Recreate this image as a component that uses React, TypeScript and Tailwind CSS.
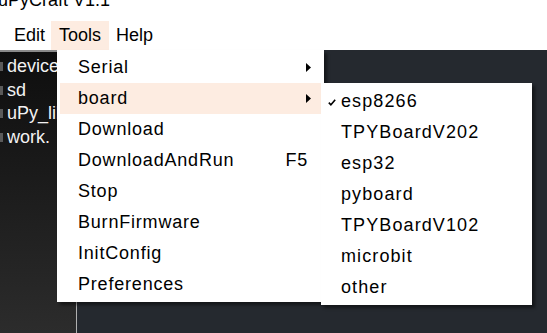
import React from "react";

const treeItems = ["device", "sd", "uPy_lib", "work."];

const toolItems = [
  { label: "Serial", sub: true },
  { label: "board", sub: true, active: true },
  { label: "Download" },
  { label: "DownloadAndRun", key: "F5" },
  { label: "Stop" },
  { label: "BurnFirmware" },
  { label: "InitConfig" },
  { label: "Preferences" },
];

const boards = ["esp8266", "TPYBoardV202", "esp32", "pyboard", "TPYBoardV102", "microbit", "other"];

const Arrow = () => (
  <svg width="5" height="9" viewBox="0 0 5 9" className="block">
    <path d="M0 0 L5 4.5 L0 9 Z" fill="#000" />
  </svg>
);

const Check = () => (
  <svg width="8" height="7" viewBox="0 0 8 7" className="block">
    <path d="M0.8 3.6 L2.9 5.8 L7.2 0.8" fill="none" stroke="#000" strokeWidth="1.6" />
  </svg>
);

export default function App() {
  return (
    <div className="relative w-[547px] h-[333px] overflow-hidden bg-white font-['Liberation_Sans',Arial,sans-serif] text-black">
      {/* window title, cut by the top edge */}
      <div className="h-[20px] overflow-hidden">
        <div className="mt-[-10px] ml-[-2px] text-[18px] leading-[20px] whitespace-nowrap">uPyCraft V1.1</div>
      </div>

      {/* menu bar */}
      <div className="flex h-[30px] items-stretch pl-[8px] text-[18px] pt-[1px]">
        <div className="px-[6px] flex items-center">Edit</div>
        <div className="px-[8px] flex items-center bg-[#fdece1]">Tools</div>
        <div className="px-[7px] flex items-center">Help</div>
      </div>

      {/* body */}
      <div className="flex h-[283px]">
        <div className="w-[77px] shrink-0 border-t-2 border-[#8a8a8a] border-r border-r-[#b0b0b0] bg-gradient-to-b from-[#0e0e0e] to-[#2c2c2c] overflow-hidden pt-[3px]">
          {treeItems.map((t) => (
            <div key={t} className="flex items-center h-[23.5px] whitespace-nowrap">
              <span className="w-[3px] h-[9px] bg-[#5a5a5a] mr-[4px] shrink-0" />
              <span className="w-[50px] overflow-hidden text-[18px] text-[#f2f2f2]">{t}</span>
            </div>
          ))}
        </div>
        <div className="flex-1 bg-[#25292f]" />
      </div>

      {/* Tools dropdown */}
      <div className="absolute left-[57px] top-[50px] w-[267px] bg-white py-[2px] px-[3px] shadow-[3px_3px_3px_rgba(0,0,0,0.45)] text-[18px] tracking-[0.8px]">
        {toolItems.map((it) => (
          <div
            key={it.label}
            className={`flex items-center h-[31px] pl-[18px] pr-[10px] ${it.active ? "bg-[#fdece1]" : ""}`}
          >
            <span className="flex-1">{it.label}</span>
            {it.key && <span className="mr-[3px]">{it.key}</span>}
            {it.sub && <Arrow />}
          </div>
        ))}
      </div>

      {/* board submenu */}
      <div className="absolute left-[321px] top-[83px] w-[211px] bg-white pt-[3px] pb-[2px] shadow-[3px_3px_3px_rgba(0,0,0,0.45)] text-[18px] tracking-[1.1px]">
        {boards.map((b, i) => (
          <div key={b} className="flex items-center h-[31px]">
            <span className="w-[20px] flex justify-end pr-[5px] pt-[2px]">{i === 0 && <Check />}</span>
            <span>{b}</span>
          </div>
        ))}
      </div>
    </div>
  );
}
